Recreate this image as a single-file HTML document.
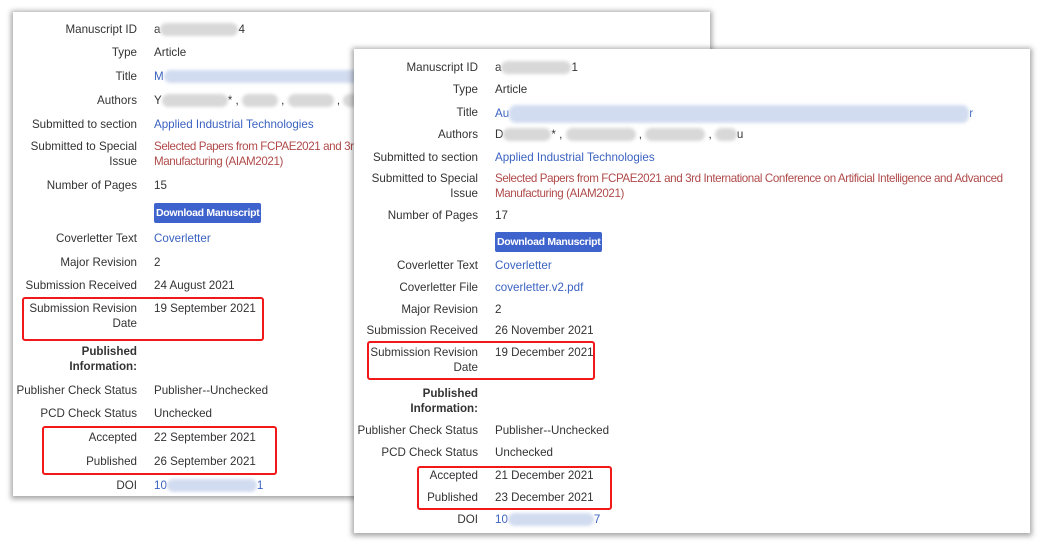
<!DOCTYPE html>
<html><head><meta charset="utf-8"><style>
body{margin:0;width:1046px;height:549px;background:#fff;position:relative;overflow:hidden;font-family:"Liberation Sans",Arial,sans-serif;font-size:11.6px;color:#333}
.p{position:absolute;background:#fff;box-shadow:0 1px 5px 2px rgba(0,0,0,.35);overflow:hidden}
.r{position:absolute;left:0;width:100%;line-height:15px}
.l{position:absolute;width:124px;text-align:right;left:0}
.v{position:absolute;left:141px;white-space:nowrap}
.b{color:#3a62c0}.m{color:#b04a4a;letter-spacing:-.4px}
.btn{background:#3f63cc;color:#fff;font-weight:bold;font-size:10.5px;padding:3px 2px;border-radius:2px;line-height:14px;display:inline-block;letter-spacing:-.3px}
.bl{display:inline-block;height:13px;vertical-align:middle;border-radius:7px;background:#d8d8d8;filter:blur(1.5px)}
.bb{background:#d2dcf0}
.box{position:absolute;border:2px solid #f01818;border-radius:3px}
</style></head><body>
<div class="p" style="left:13px;top:12px;width:697px;height:484px">
<div class="r" style="top:10px"><span class="l">Manuscript ID</span><span class="v">a<span class="bl" style="width:78px"></span>4</span></div>
<div class="r" style="top:33px"><span class="l">Type</span><span class="v">Article</span></div>
<div class="r" style="top:57px"><span class="l">Title</span><span class="v b">M<span class="bl bb" style="width:600px"></span></span></div>
<div class="r" style="top:81px"><span class="l">Authors</span><span class="v">Y<span class="bl" style="width:66px"></span>* , <span class="bl" style="width:36px"></span> , <span class="bl" style="width:46px"></span> , <span class="bl" style="width:40px"></span></span></div>
<div class="r" style="top:105px"><span class="l">Submitted to section</span><span class="v b">Applied Industrial Technologies</span></div>
<div class="r" style="top:127px"><span class="l">Submitted to Special Issue</span><span class="v m">Selected Papers from FCPAE2021 and 3rd International Conference on Artificial Intelligence and Advanced<br>Manufacturing (AIAM2021)</span></div>
<div class="r" style="top:166px"><span class="l">Number of Pages</span><span class="v">15</span></div>
<div class="r" style="top:191px"><span class="v"><span class="btn">Download Manuscript</span></span></div>
<div class="r" style="top:219px"><span class="l">Coverletter Text</span><span class="v b">Coverletter</span></div>
<div class="r" style="top:243px"><span class="l">Major Revision</span><span class="v">2</span></div>
<div class="r" style="top:266px"><span class="l">Submission Received</span><span class="v">24 August 2021</span></div>
<div class="r" style="top:289px"><span class="l">Submission Revision Date</span><span class="v">19 September 2021</span></div>
<div class="r" style="top:332px"><span class="l" style="font-weight:bold">Published Information:</span></div>
<div class="r" style="top:371px"><span class="l" style="width:130px;left:-6px">Publisher Check Status</span><span class="v">Publisher--Unchecked</span></div>
<div class="r" style="top:394px"><span class="l">PCD Check Status</span><span class="v">Unchecked</span></div>
<div class="r" style="top:418px"><span class="l">Accepted</span><span class="v">22 September 2021</span></div>
<div class="r" style="top:442px"><span class="l">Published</span><span class="v">26 September 2021</span></div>
<div class="r" style="top:466px"><span class="l">DOI</span><span class="v b">10<span class="bl bb" style="width:90px"></span>1</span></div>
</div>
<div class="box" style="left:22px;top:297px;width:238px;height:40px"></div>
<div class="box" style="left:42px;top:426px;width:231px;height:45px"></div>

<div class="p" style="left:354px;top:49px;width:676px;height:484px">
<div class="r" style="top:11px"><span class="l">Manuscript ID</span><span class="v">a<span class="bl" style="width:70px"></span>1</span></div>
<div class="r" style="top:33px"><span class="l">Type</span><span class="v">Article</span></div>
<div class="r" style="top:56px"><span class="l">Title</span><span class="v b">Au<span class="bl bb" style="width:460px;height:18px"></span>r</span></div>
<div class="r" style="top:78px"><span class="l">Authors</span><span class="v">D<span class="bl" style="width:48px"></span>* , <span class="bl" style="width:70px"></span> , <span class="bl" style="width:60px"></span> , <span class="bl" style="width:22px"></span>u</span></div>
<div class="r" style="top:101px"><span class="l">Submitted to section</span><span class="v b">Applied Industrial Technologies</span></div>
<div class="r" style="top:122px"><span class="l">Submitted to Special Issue</span><span class="v m">Selected Papers from FCPAE2021 and 3rd International Conference on Artificial Intelligence and Advanced<br>Manufacturing (AIAM2021)</span></div>
<div class="r" style="top:159px"><span class="l">Number of Pages</span><span class="v">17</span></div>
<div class="r" style="top:183px"><span class="v"><span class="btn">Download Manuscript</span></span></div>
<div class="r" style="top:209px"><span class="l">Coverletter Text</span><span class="v b">Coverletter</span></div>
<div class="r" style="top:231px"><span class="l">Coverletter File</span><span class="v b">coverletter.v2.pdf</span></div>
<div class="r" style="top:253px"><span class="l">Major Revision</span><span class="v">2</span></div>
<div class="r" style="top:274px"><span class="l">Submission Received</span><span class="v">26 November 2021</span></div>
<div class="r" style="top:296px"><span class="l">Submission Revision Date</span><span class="v">19 December 2021</span></div>
<div class="r" style="top:337px"><span class="l" style="font-weight:bold">Published Information:</span></div>
<div class="r" style="top:374px"><span class="l" style="width:130px;left:-6px">Publisher Check Status</span><span class="v">Publisher--Unchecked</span></div>
<div class="r" style="top:396px"><span class="l">PCD Check Status</span><span class="v">Unchecked</span></div>
<div class="r" style="top:419px"><span class="l">Accepted</span><span class="v">21 December 2021</span></div>
<div class="r" style="top:441px"><span class="l">Published</span><span class="v">23 December 2021</span></div>
<div class="r" style="top:463px"><span class="l">DOI</span><span class="v b">10<span class="bl bb" style="width:86px"></span>7</span></div>
</div>
<div class="box" style="left:367px;top:341px;width:224px;height:35px"></div>
<div class="box" style="left:417px;top:466px;width:191px;height:40px"></div>
</body></html>
